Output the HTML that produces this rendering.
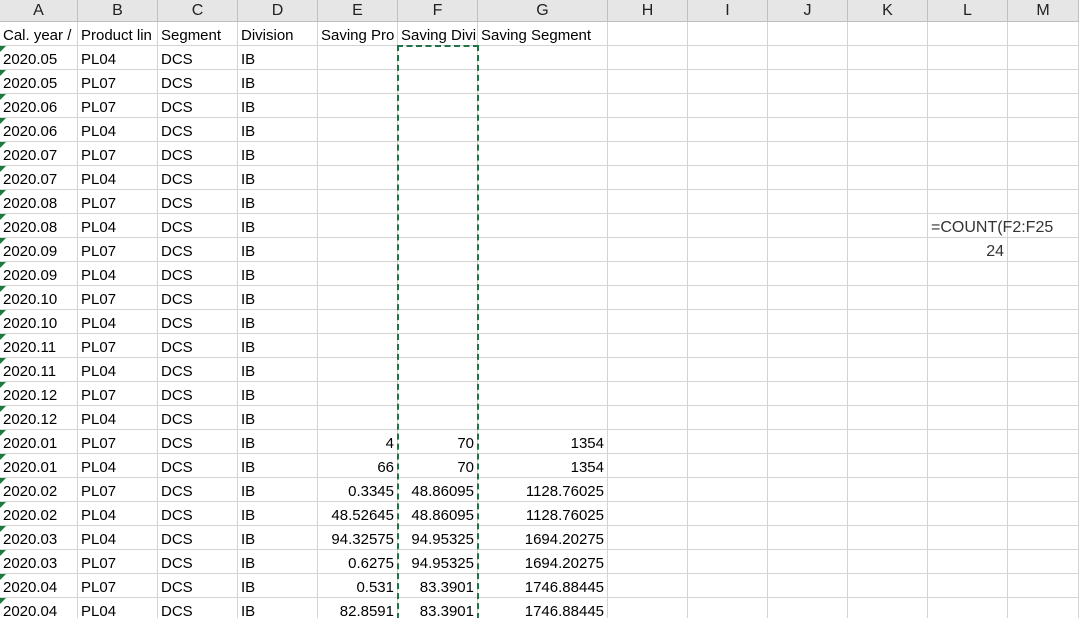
<!DOCTYPE html>
<html><head><meta charset="utf-8"><style>
html,body{margin:0;width:1079px;height:618px;overflow:hidden;background:#fff}
body{font-family:"Liberation Sans","Noto Sans CJK SC",sans-serif;font-size:15px;color:#000;position:relative}
.row{display:flex;height:24px}
.c{box-sizing:border-box;flex:none;height:24px;line-height:23px;padding:2px 3px 0;border-right:1px solid #d4d4d4;border-bottom:1px solid #d4d4d4;white-space:nowrap;overflow:hidden;position:relative}
.h{height:22px}
.h .c{height:22px;line-height:21px;padding-top:0;background:#e6e6e6;text-align:center;font-size:16px;color:#222;border-color:#bfbfbf}
.r{text-align:right}
.t::before{content:"";position:absolute;left:0;top:0;border-top:6px solid #1e7a3a;border-right:6px solid transparent}
.w0{width:78px}.w1{width:80px}.w6{width:130px}.w12{width:71px}
#mq{position:absolute;left:397px;top:45px;width:78px;height:580px;border:2px dashed #217346}
.ov{overflow:visible;z-index:2}
#wrap{position:absolute;left:0;top:0;width:1079px;height:618px;overflow:hidden}
</style></head><body><div id="wrap">
<div class="row h"><div class="c w0">A</div><div class="c w1">B</div><div class="c w1">C</div><div class="c w1">D</div><div class="c w1">E</div><div class="c w1">F</div><div class="c w6">G</div><div class="c w1">H</div><div class="c w1">I</div><div class="c w1">J</div><div class="c w1">K</div><div class="c w1">L</div><div class="c w12">M</div></div>
<div class="row"><div class="c w0">Cal. year /</div><div class="c w1">Product lin</div><div class="c w1">Segment</div><div class="c w1">Division</div><div class="c w1">Saving Pro</div><div class="c w1">Saving Divi</div><div class="c w6">Saving Segment</div><div class="c w1"></div><div class="c w1"></div><div class="c w1"></div><div class="c w1"></div><div class="c w1"></div><div class="c w12"></div></div>
<div class="row"><div class="c w0 t">2020.05</div><div class="c w1">PL04</div><div class="c w1">DCS</div><div class="c w1">IB</div><div class="c w1"></div><div class="c w1"></div><div class="c w6"></div><div class="c w1"></div><div class="c w1"></div><div class="c w1"></div><div class="c w1"></div><div class="c w1"></div><div class="c w12"></div></div>
<div class="row"><div class="c w0 t">2020.05</div><div class="c w1">PL07</div><div class="c w1">DCS</div><div class="c w1">IB</div><div class="c w1"></div><div class="c w1"></div><div class="c w6"></div><div class="c w1"></div><div class="c w1"></div><div class="c w1"></div><div class="c w1"></div><div class="c w1"></div><div class="c w12"></div></div>
<div class="row"><div class="c w0 t">2020.06</div><div class="c w1">PL07</div><div class="c w1">DCS</div><div class="c w1">IB</div><div class="c w1"></div><div class="c w1"></div><div class="c w6"></div><div class="c w1"></div><div class="c w1"></div><div class="c w1"></div><div class="c w1"></div><div class="c w1"></div><div class="c w12"></div></div>
<div class="row"><div class="c w0 t">2020.06</div><div class="c w1">PL04</div><div class="c w1">DCS</div><div class="c w1">IB</div><div class="c w1"></div><div class="c w1"></div><div class="c w6"></div><div class="c w1"></div><div class="c w1"></div><div class="c w1"></div><div class="c w1"></div><div class="c w1"></div><div class="c w12"></div></div>
<div class="row"><div class="c w0 t">2020.07</div><div class="c w1">PL07</div><div class="c w1">DCS</div><div class="c w1">IB</div><div class="c w1"></div><div class="c w1"></div><div class="c w6"></div><div class="c w1"></div><div class="c w1"></div><div class="c w1"></div><div class="c w1"></div><div class="c w1"></div><div class="c w12"></div></div>
<div class="row"><div class="c w0 t">2020.07</div><div class="c w1">PL04</div><div class="c w1">DCS</div><div class="c w1">IB</div><div class="c w1"></div><div class="c w1"></div><div class="c w6"></div><div class="c w1"></div><div class="c w1"></div><div class="c w1"></div><div class="c w1"></div><div class="c w1"></div><div class="c w12"></div></div>
<div class="row"><div class="c w0 t">2020.08</div><div class="c w1">PL07</div><div class="c w1">DCS</div><div class="c w1">IB</div><div class="c w1"></div><div class="c w1"></div><div class="c w6"></div><div class="c w1"></div><div class="c w1"></div><div class="c w1"></div><div class="c w1"></div><div class="c w1"></div><div class="c w12"></div></div>
<div class="row"><div class="c w0 t">2020.08</div><div class="c w1">PL04</div><div class="c w1">DCS</div><div class="c w1">IB</div><div class="c w1"></div><div class="c w1"></div><div class="c w6"></div><div class="c w1"></div><div class="c w1"></div><div class="c w1"></div><div class="c w1"></div><div class="c w1 ov" style="color:#333;font-size:16px">=COUNT(F2:F25</div><div class="c w12"></div></div>
<div class="row"><div class="c w0 t">2020.09</div><div class="c w1">PL07</div><div class="c w1">DCS</div><div class="c w1">IB</div><div class="c w1"></div><div class="c w1"></div><div class="c w6"></div><div class="c w1"></div><div class="c w1"></div><div class="c w1"></div><div class="c w1"></div><div class="c w1 r" style="color:#333;font-size:16px">24</div><div class="c w12"></div></div>
<div class="row"><div class="c w0 t">2020.09</div><div class="c w1">PL04</div><div class="c w1">DCS</div><div class="c w1">IB</div><div class="c w1"></div><div class="c w1"></div><div class="c w6"></div><div class="c w1"></div><div class="c w1"></div><div class="c w1"></div><div class="c w1"></div><div class="c w1"></div><div class="c w12"></div></div>
<div class="row"><div class="c w0 t">2020.10</div><div class="c w1">PL07</div><div class="c w1">DCS</div><div class="c w1">IB</div><div class="c w1"></div><div class="c w1"></div><div class="c w6"></div><div class="c w1"></div><div class="c w1"></div><div class="c w1"></div><div class="c w1"></div><div class="c w1"></div><div class="c w12"></div></div>
<div class="row"><div class="c w0 t">2020.10</div><div class="c w1">PL04</div><div class="c w1">DCS</div><div class="c w1">IB</div><div class="c w1"></div><div class="c w1"></div><div class="c w6"></div><div class="c w1"></div><div class="c w1"></div><div class="c w1"></div><div class="c w1"></div><div class="c w1"></div><div class="c w12"></div></div>
<div class="row"><div class="c w0 t">2020.11</div><div class="c w1">PL07</div><div class="c w1">DCS</div><div class="c w1">IB</div><div class="c w1"></div><div class="c w1"></div><div class="c w6"></div><div class="c w1"></div><div class="c w1"></div><div class="c w1"></div><div class="c w1"></div><div class="c w1"></div><div class="c w12"></div></div>
<div class="row"><div class="c w0 t">2020.11</div><div class="c w1">PL04</div><div class="c w1">DCS</div><div class="c w1">IB</div><div class="c w1"></div><div class="c w1"></div><div class="c w6"></div><div class="c w1"></div><div class="c w1"></div><div class="c w1"></div><div class="c w1"></div><div class="c w1"></div><div class="c w12"></div></div>
<div class="row"><div class="c w0 t">2020.12</div><div class="c w1">PL07</div><div class="c w1">DCS</div><div class="c w1">IB</div><div class="c w1"></div><div class="c w1"></div><div class="c w6"></div><div class="c w1"></div><div class="c w1"></div><div class="c w1"></div><div class="c w1"></div><div class="c w1"></div><div class="c w12"></div></div>
<div class="row"><div class="c w0 t">2020.12</div><div class="c w1">PL04</div><div class="c w1">DCS</div><div class="c w1">IB</div><div class="c w1"></div><div class="c w1"></div><div class="c w6"></div><div class="c w1"></div><div class="c w1"></div><div class="c w1"></div><div class="c w1"></div><div class="c w1"></div><div class="c w12"></div></div>
<div class="row"><div class="c w0 t">2020.01</div><div class="c w1">PL07</div><div class="c w1">DCS</div><div class="c w1">IB</div><div class="c w1 r">4</div><div class="c w1 r">70</div><div class="c w6 r">1354</div><div class="c w1"></div><div class="c w1"></div><div class="c w1"></div><div class="c w1"></div><div class="c w1"></div><div class="c w12"></div></div>
<div class="row"><div class="c w0 t">2020.01</div><div class="c w1">PL04</div><div class="c w1">DCS</div><div class="c w1">IB</div><div class="c w1 r">66</div><div class="c w1 r">70</div><div class="c w6 r">1354</div><div class="c w1"></div><div class="c w1"></div><div class="c w1"></div><div class="c w1"></div><div class="c w1"></div><div class="c w12"></div></div>
<div class="row"><div class="c w0 t">2020.02</div><div class="c w1">PL07</div><div class="c w1">DCS</div><div class="c w1">IB</div><div class="c w1 r">0.3345</div><div class="c w1 r">48.86095</div><div class="c w6 r">1128.76025</div><div class="c w1"></div><div class="c w1"></div><div class="c w1"></div><div class="c w1"></div><div class="c w1"></div><div class="c w12"></div></div>
<div class="row"><div class="c w0 t">2020.02</div><div class="c w1">PL04</div><div class="c w1">DCS</div><div class="c w1">IB</div><div class="c w1 r">48.52645</div><div class="c w1 r">48.86095</div><div class="c w6 r">1128.76025</div><div class="c w1"></div><div class="c w1"></div><div class="c w1"></div><div class="c w1"></div><div class="c w1"></div><div class="c w12"></div></div>
<div class="row"><div class="c w0 t">2020.03</div><div class="c w1">PL04</div><div class="c w1">DCS</div><div class="c w1">IB</div><div class="c w1 r">94.32575</div><div class="c w1 r">94.95325</div><div class="c w6 r">1694.20275</div><div class="c w1"></div><div class="c w1"></div><div class="c w1"></div><div class="c w1"></div><div class="c w1"></div><div class="c w12"></div></div>
<div class="row"><div class="c w0 t">2020.03</div><div class="c w1">PL07</div><div class="c w1">DCS</div><div class="c w1">IB</div><div class="c w1 r">0.6275</div><div class="c w1 r">94.95325</div><div class="c w6 r">1694.20275</div><div class="c w1"></div><div class="c w1"></div><div class="c w1"></div><div class="c w1"></div><div class="c w1"></div><div class="c w12"></div></div>
<div class="row"><div class="c w0 t">2020.04</div><div class="c w1">PL07</div><div class="c w1">DCS</div><div class="c w1">IB</div><div class="c w1 r">0.531</div><div class="c w1 r">83.3901</div><div class="c w6 r">1746.88445</div><div class="c w1"></div><div class="c w1"></div><div class="c w1"></div><div class="c w1"></div><div class="c w1"></div><div class="c w12"></div></div>
<div class="row"><div class="c w0 t">2020.04</div><div class="c w1">PL04</div><div class="c w1">DCS</div><div class="c w1">IB</div><div class="c w1 r">82.8591</div><div class="c w1 r">83.3901</div><div class="c w6 r">1746.88445</div><div class="c w1"></div><div class="c w1"></div><div class="c w1"></div><div class="c w1"></div><div class="c w1"></div><div class="c w12"></div></div>
<div id="mq"></div>
</div></body></html>
